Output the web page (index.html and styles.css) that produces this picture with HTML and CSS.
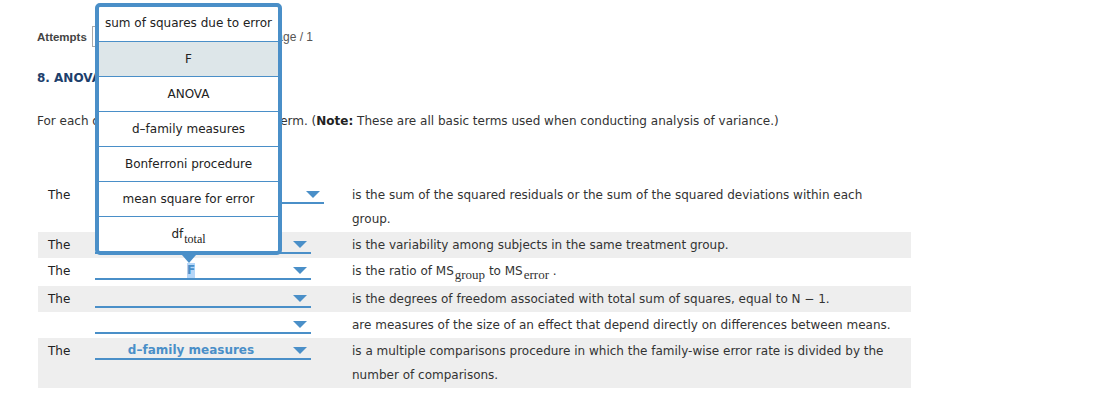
FILE: index.html
```html
<!DOCTYPE html>
<html lang="en">
<head>
<meta charset="utf-8">
<title>ANOVA terms</title>
<link rel="stylesheet" href="styles.css">
</head>
<body>
<div class="page">
  <div class="attempts">
    <span class="attempts-label">Attempts</span>
    <span class="attempts-box"></span>
    <span class="attempts-avg">Average / 1</span>
  </div>

  <h2 class="qtitle">8. ANOVA terms</h2>

  <p class="intro">For each description, select the correct term. (<b>Note:</b> These are all basic terms used when conducting analysis of variance.)</p>

  <div class="qtable">
    <div class="row">
      <div class="lead">The</div>
      <div class="select select-wide"><span class="value"></span><span class="caret"></span></div>
      <div class="desc">is the sum of the squared residuals or the sum of the squared deviations within each group.</div>
    </div>
    <div class="row alt">
      <div class="lead">The</div>
      <div class="select"><span class="value"></span><span class="caret"></span></div>
      <div class="desc">is the variability among subjects in the same treatment group.</div>
    </div>
    <div class="row row-sub">
      <div class="lead">The</div>
      <div class="select"><span class="value value-hl">F</span><span class="caret"></span></div>
      <div class="desc">is the ratio of MS<span class="sub">group</span> to MS<span class="sub">error</span> .</div>
    </div>
    <div class="row alt">
      <div class="lead">The</div>
      <div class="select"><span class="value"></span><span class="caret"></span></div>
      <div class="desc">is the degrees of freedom associated with total sum of squares, equal to N − 1.</div>
    </div>
    <div class="row">
      <div class="lead"></div>
      <div class="select"><span class="value"></span><span class="caret"></span></div>
      <div class="desc">are measures of the size of an effect that depend directly on differences between means.</div>
    </div>
    <div class="row alt">
      <div class="lead">The</div>
      <div class="select"><span class="value">d–family measures</span><span class="caret"></span></div>
      <div class="desc">is a multiple comparisons procedure in which the family-wise error rate is divided by the number of comparisons.</div>
    </div>
  </div>

  <ul class="popup">
    <li class="opt">sum of squares due to error</li>
    <li class="opt opt-selected">F</li>
    <li class="opt">ANOVA</li>
    <li class="opt">d–family measures</li>
    <li class="opt">Bonferroni procedure</li>
    <li class="opt">mean square for error</li>
    <li class="opt">df<span class="sub sub-pop">total</span></li>
  </ul>
</div>
</body>
</html>
```

FILE: styles.css
```css
* {
  box-sizing: border-box;
}

body {
  margin: 0;
  background: #fff;
  font-family: "DejaVu Sans", Verdana, sans-serif;
  font-size: 12px;
  color: #333;
}

.page {
  position: relative;
  width: 1107px;
  height: 412px;
  padding: 26px 0 0 37px;
}

.attempts {
  display: flex;
  align-items: center;
  height: 21px;
  font-family: "Liberation Sans", Arial, sans-serif;
  font-size: 11.5px;
}

.attempts-label {
  font-weight: bold;
  color: #444;
}

.attempts-box {
  width: 150px;
  height: 21px;
  margin-left: 5px;
  border: 1px solid #aaa;
}

.attempts-avg {
  margin-left: 10px;
  font-size: 12px;
  color: #555;
}

.qtitle {
  margin: 23px 0 0;
  font-size: 12px;
  line-height: 16px;
  font-weight: bold;
  color: #1d3f6c;
}

.intro {
  margin: 27px 0 0;
  line-height: 16px;
  color: #333;
}

.intro b {
  color: #222;
}

.qtable {
  margin: 53px 0 0 1px;
  width: 873px;
}

.row {
  display: grid;
  grid-template-columns: 47px 216px 1fr;
  padding: 1px 11px 1px 10px;
  line-height: 24px;
}

.row.alt {
  background: #eee;
}

.row-sub {
  padding-bottom: 3px;
}

.lead {
  color: #222;
}

.desc {
  padding-left: 41px;
  color: #333;
}

.select {
  position: relative;
  display: flex;
  justify-content: center;
  align-items: flex-end;
  height: 21px;
  padding-right: 24px;
  border-bottom: 2px solid #4a8fc8;
}

.select-wide {
  width: 229px;
}

.value {
  display: inline-block;
  line-height: 15px;
  font-weight: bold;
  color: #4a8fc8;
}

.value-hl {
  background: #b5d6f8;
}

.caret {
  position: absolute;
  right: 4px;
  top: 8px;
  width: 0;
  height: 0;
  border-left: 7px solid transparent;
  border-right: 7px solid transparent;
  border-top: 7px solid #4a8fc8;
}

.sub {
  font-family: "Liberation Serif", "Times New Roman", serif;
  font-size: 13px;
  line-height: 0;
  vertical-align: -4px;
  margin-left: 1px;
}

.popup {
  position: absolute;
  left: 95px;
  top: 3px;
  width: 187px;
  margin: 0;
  padding: 0;
  list-style: none;
  background: #fff;
  border: 4px solid #4a8fc8;
  border-radius: 5px;
}

.popup::after {
  content: "";
  position: absolute;
  left: 50%;
  bottom: -12px;
  margin-left: -7px;
  border-left: 7px solid transparent;
  border-right: 7px solid transparent;
  border-top: 8px solid #4a8fc8;
}

.opt {
  height: 35px;
  line-height: 34px;
  text-align: center;
  color: #222;
  border-top: 1px solid #4a8fc8;
}

.opt:first-child {
  height: 34px;
  line-height: 32px;
  border-top: 0;
}

.opt-selected {
  background: #dde6e9;
}

.sub-pop {
  font-size: 12px;
  vertical-align: -5px;
}
```
